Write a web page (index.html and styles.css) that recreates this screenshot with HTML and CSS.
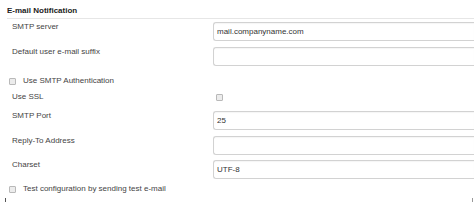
FILE: index.html
```html
<!DOCTYPE html>
<html>

<head>
  <title>E-mail Notification</title>
  <meta charset="UTF-8">
  <link rel="stylesheet" href="styles.css">
</head>

<body>
  <div class="section">

    <div class="section_title">E-mail Notification</div>

    <div class="row row_first">
      <div class="label">SMTP server</div>
      <div class="field"><input class="text_input" type="text" value="mail.companyname.com"></div>
    </div>

    <div class="row">
      <div class="label">Default user e-mail suffix</div>
      <div class="field"><input class="text_input" type="text" value=""></div>
    </div>

    <div class="check_row check_auth">
      <input class="check" type="checkbox">
      <span>Use SMTP Authentication</span>
    </div>

    <div class="row row_ssl">
      <div class="label">Use SSL</div>
      <div class="field"><input class="check check_field" type="checkbox"></div>
    </div>

    <div class="row row_port">
      <div class="label">SMTP Port</div>
      <div class="field"><input class="text_input" type="text" value="25"></div>
    </div>

    <div class="row">
      <div class="label">Reply-To Address</div>
      <div class="field"><input class="text_input" type="text" value=""></div>
    </div>

    <div class="row row_charset">
      <div class="label">Charset</div>
      <div class="field"><input class="text_input" type="text" value="UTF-8"></div>
    </div>

    <div class="check_row check_test">
      <input class="check" type="checkbox">
      <span>Test configuration by sending test e-mail</span>
    </div>

    <div class="bottom_box"></div>

  </div>
</body>

</html>
```

FILE: styles.css
```css
html,
body {
  margin: 0;
  padding: 0;
  overflow: hidden;
  background-color: white;
}

body {
  width: 474px;
  height: 202px;
  font-family: "Liberation Sans", Arial, sans-serif;
  font-size: 8px;
  color: #444;
}

.section {
  padding-top: 6px;
}

.section_title {
  margin-left: 7px;
  height: 10px;
  line-height: 10px;
  padding-bottom: 2px;
  border-bottom: 1px solid #e6e6e6;
  font-weight: bold;
  color: #222;
}

.row {
  display: grid;
  grid-template-columns: 201px 1fr;
  padding-left: 12px;
  margin-top: 6px;
}

.row_first {
  margin-top: 3px;
}

.row_ssl {
  margin-top: 6px;
}

.row_port {
  margin-top: 9px;
}

.row_charset {
  margin-top: 5px;
}

.label {
  line-height: 10px;
  white-space: nowrap;
}

.field {
  display: flex;
  align-items: flex-start;
  min-width: 0;
}

/* the inputs run on past the right edge of the window */
.text_input {
  width: 100%;
  height: 19px;
  box-sizing: border-box;
  margin: 0;
  padding: 0 3px;
  border: 1px solid #d2d2d2;
  border-right: none;
  border-radius: 3px 0 0 3px;
  box-shadow: inset 0 1px 1px rgba(0, 0, 0, 0.04);
  font-family: "Liberation Sans", Arial, sans-serif;
  font-size: 8px;
  color: #333;
  outline: none;
}

.check_row {
  display: flex;
  align-items: center;
  height: 10px;
  line-height: 10px;
  padding-left: 9px;
}

.check_auth {
  margin-top: 10px;
}

.check_test {
  margin-top: 5px;
}

.check {
  appearance: none;
  -webkit-appearance: none;
  width: 7px;
  height: 7px;
  margin: 0 7px 0 0;
  border: 1px solid #b9b9b9;
  border-radius: 1px;
  background-color: #ececec;
  box-sizing: border-box;
}

.check_field {
  margin: 2px 0 0 3px;
}

.bottom_box {
  margin: 4px 1px 0 5px;
  height: 10px;
  border-left: 1px solid #555;
  border-right: 1px solid #999;
}
```
